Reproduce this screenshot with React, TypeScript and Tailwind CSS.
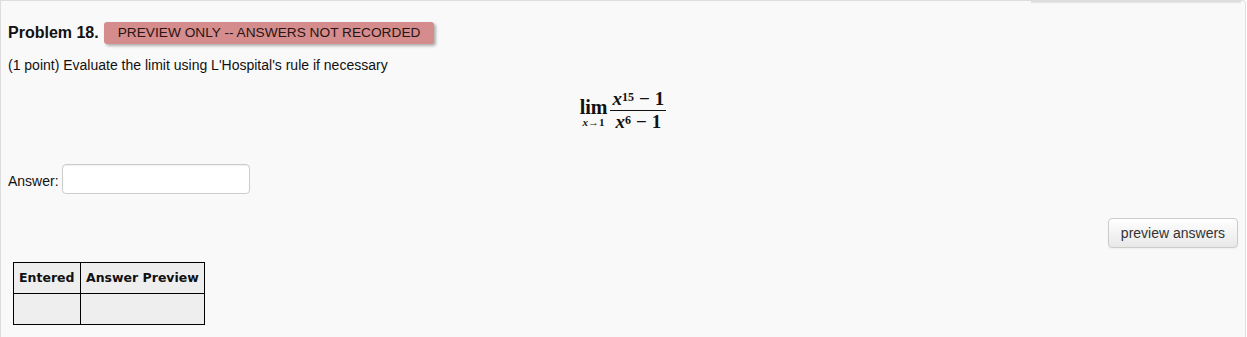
import React from "react"

const serif = { fontFamily: '"Liberation Serif", "Times New Roman", serif' }

function LimitExpr() {
  return (
    <div className="flex items-center justify-center text-[#111]" style={serif}>
      <div className="flex flex-col items-center mr-[3px] mt-[6px]">
        <span className="text-[20px] leading-[17px] font-bold">lim</span>
        <span className="text-[11px] leading-[13px] font-bold italic whitespace-nowrap">
          x<span className="not-italic">→1</span>
        </span>
      </div>
      <div className="flex flex-col items-center">
        <span className="text-[19px] leading-[18px] font-bold px-[2px] whitespace-nowrap">
          <i>x</i>
          <sup className="text-[12px] relative -top-[4px]">15</sup>
          <span className="mx-[5px]">−</span>1
        </span>
        <span className="h-[1px] w-full bg-[#111] my-[2px]" />
        <span className="text-[19px] leading-[18px] font-bold px-[2px] whitespace-nowrap">
          <i>x</i>
          <sup className="text-[12px] relative -top-[4px]">6</sup>
          <span className="mx-[5px]">−</span>1
        </span>
      </div>
    </div>
  )
}

export default function App() {
  return (
    <div
      className="relative w-[1246px] h-[337px] bg-[#f9f9f9] border-l border-t border-r border-[#dedede] rounded-tr-[4px] text-[#111] overflow-hidden"
      style={{ fontFamily: '"Liberation Sans", Arial, sans-serif' }}
    >
      <div className="absolute top-0 left-[1030px] w-[210px] h-[3px] bg-gradient-to-b from-[#d6d6d6] to-transparent" />

      <div className="pl-[7px] pt-[20px] flex items-center gap-[5px]">
        <span className="text-[16px] font-bold">Problem 18.</span>
        <span className="h-[22px] px-[14px] flex items-center rounded-[3px] bg-[#d48c8c] text-[13.7px] text-[#2a1414] shadow-[2px_2px_3px_rgba(0,0,0,0.3)]">
          PREVIEW ONLY -- ANSWERS NOT RECORDED
        </span>
      </div>

      <p className="pl-[7px] mt-[12px] text-[14px] leading-[17px]">
        (1 point) Evaluate the limit using L'Hospital's rule if necessary
      </p>

      <div className="mt-[16px] ml-[0px]">
        <LimitExpr />
      </div>

      <div className="pl-[7px] mt-[33px] flex items-center gap-[3px]">
        <span className="text-[14px] mt-[5px]">Answer:</span>
        <input
          type="text"
          className="w-[188px] h-[30px] bg-white border border-[#cccccc] rounded-[4px] shadow-[inset_0_1px_1px_rgba(0,0,0,0.06)] outline-none"
        />
      </div>

      <div className="flex justify-end pr-[7px] mt-[24px]">
        <button className="w-[130px] h-[30px] text-[14px] text-[#333] rounded-[4px] border border-[#cccccc] bg-gradient-to-b from-white to-[#e8e8e8] shadow-[inset_0_1px_0_rgba(255,255,255,0.2),0_1px_2px_rgba(0,0,0,0.05)]">
          preview answers
        </button>
      </div>

      <table
        className="ml-[12px] mt-[14px] table-fixed w-[192px] border-collapse border border-black text-[12.5px] whitespace-nowrap"
        style={{ fontFamily: '"DejaVu Sans", Verdana, sans-serif' }}
      >
        <tbody>
          <tr className="h-[31px]">
            <th className="border border-black bg-[#eeeeee] px-[5px] font-bold text-left w-[67px]">Entered</th>
            <th className="border border-black bg-[#eeeeee] px-[5px] font-bold text-left">Answer Preview</th>
          </tr>
          <tr className="h-[31px]">
            <td className="border border-black bg-[#eeeeee]" />
            <td className="border border-black bg-[#eeeeee]" />
          </tr>
        </tbody>
      </table>
    </div>
  )
}
